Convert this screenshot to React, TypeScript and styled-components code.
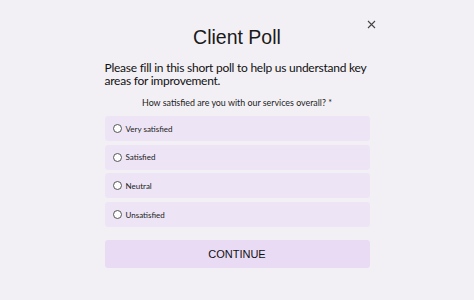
import React from "react";
import styled, { createGlobalStyle } from "styled-components";

const Global = createGlobalStyle`
  html, body { margin: 0; padding: 0; background: #f3f0f5; }
  * { box-sizing: border-box; }
`;

const Page = styled.div`
  width: 474px;
  height: 300px;
  background: #f3f0f5;
  position: relative;
  display: flex;
  justify-content: center;
`;

const Column = styled.div`
  width: 265px;
  display: flex;
  flex-direction: column;
  padding-top: 25px;
`;

const Title = styled.h1`
  margin: 0;
  font-family: "Liberation Sans", Arial, sans-serif;
  font-weight: 400;
  font-size: 19.5px;
  line-height: 24px;
  text-align: center;
  color: #1a1a1a;
`;

const Intro = styled.p`
  margin: 12px 0 0;
  font-family: Lato, "Noto Sans", sans-serif;
  font-size: 12px;
  letter-spacing: -0.25px;
  line-height: 13px;
  color: #111;
`;

const Question = styled.p`
  margin: 10px 0 7px;
  font-family: Lato, "Noto Sans", sans-serif;
  font-size: 8.9px;
  line-height: 12px;
  text-align: center;
  color: #222;
`;

const Options = styled.div`
  display: flex;
  flex-direction: column;
  gap: 3.7px;
`;

const Option = styled.label`
  height: 25px;
  border-radius: 3px;
  background: #ede5f6;
  display: flex;
  align-items: center;
  gap: 4px;
  padding-left: 8px;
  font-family: Lato, "Noto Sans", sans-serif;
  font-size: 8px;
  color: #222;
`;

const Radio = styled.span`
  width: 9px;
  height: 9px;
  border-radius: 50%;
  border: 1px solid #555;
  background: #fff;
`;

const Button = styled.button`
  margin-top: 13px;
  height: 28px;
  border: none;
  border-radius: 3px;
  background: #eadbf5;
  font-family: "Liberation Sans", Arial, sans-serif;
  font-size: 11px;
  color: #111;
  padding: 0;
`;

const Close = styled.button`
  position: absolute;
  top: 19px;
  left: 366px;
  width: 11px;
  height: 11px;
  padding: 0;
  border: none;
  background: transparent;
  display: flex;
  align-items: center;
  justify-content: center;
`;

const options = ["Very satisfied", "Satisfied", "Neutral", "Unsatisfied"];

export default function App() {
  return (
    <Page>
      <Global />
      <Column>
        <Title>Client Poll</Title>
        <Intro>Please fill in this short poll to help us understand key areas for improvement.</Intro>
        <Question>How satisfied are you with our services overall? *</Question>
        <Options>
          {options.map((o) => (
            <Option key={o}>
              <Radio />
              {o}
            </Option>
          ))}
        </Options>
        <Button>CONTINUE</Button>
      </Column>
      <Close aria-label="close">
        <svg width="9" height="9" viewBox="0 0 9 9">
          <path d="M1 1L8 8M8 1L1 8" stroke="#444" strokeWidth="1.1" />
        </svg>
      </Close>
    </Page>
  );
}
